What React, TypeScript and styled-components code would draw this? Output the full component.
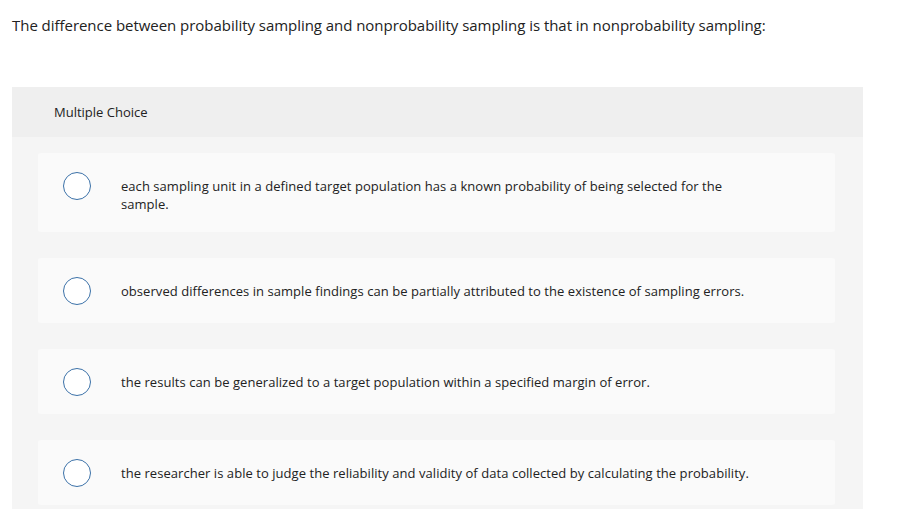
import React from 'react';
import styled, { createGlobalStyle } from 'styled-components';

const GlobalStyle = createGlobalStyle`
  body {
    margin: 0;
    background: #ffffff;
    font-family: "Open Sans", "Liberation Sans", Arial, sans-serif;
    color: #2b2b2b;
  }
`;

const Page = styled.div`
  padding: 15px 12px 0 12px;
`;

const Question = styled.p`
  margin: 0;
  font-size: 15px;
  line-height: 20px;
  letter-spacing: -0.04px;
  color: #222;
`;

const Panel = styled.div`
  width: 851px;
  margin-top: 52px;
  background: #f5f5f5;
  padding-bottom: 20px;
`;

const PanelHeader = styled.div`
  height: 50px;
  display: flex;
  align-items: center;
  padding-left: 42px;
  background: #efefef;
  font-size: 13px;
  color: #222;
`;

const ChoiceList = styled.div`
  display: flex;
  flex-direction: column;
  gap: 26px;
  padding: 16px 28px 0 26px;
`;

const Choice = styled.label`
  display: flex;
  align-items: flex-start;
  background: #fafafa;
  border-radius: 3px;
  padding: 19px 20px 18px 25px;
  cursor: pointer;
`;

const Radio = styled.span`
  flex: none;
  width: 28px;
  height: 28px;
  box-sizing: border-box;
  border-radius: 50%;
  border: 1.5px solid #3b71a8;
  background: #ffffff;
`;

const ChoiceText = styled.span`
  padding: 5px 0 1px;
  margin-left: 30px;
  max-width: 640px;
  font-size: 13px;
  line-height: 18px;
  letter-spacing: 0.05px;
  color: #222;
`;

const choices = [
  'each sampling unit in a defined target population has a known probability of being selected for the sample.',
  'observed differences in sample findings can be partially attributed to the existence of sampling errors.',
  'the results can be generalized to a target population within a specified margin of error.',
  'the researcher is able to judge the reliability and validity of data collected by calculating the probability.',
];

const App: React.FC = () => {
  return (
    <>
      <GlobalStyle />
      <Page>
        <Question>
          The difference between probability sampling and nonprobability sampling is that in nonprobability sampling:
        </Question>
        <Panel>
          <PanelHeader>Multiple Choice</PanelHeader>
          <ChoiceList>
            {choices.map((text, i) => (
              <Choice key={i}>
                <Radio />
                <ChoiceText>{text}</ChoiceText>
              </Choice>
            ))}
          </ChoiceList>
        </Panel>
      </Page>
    </>
  );
};

export default App;
